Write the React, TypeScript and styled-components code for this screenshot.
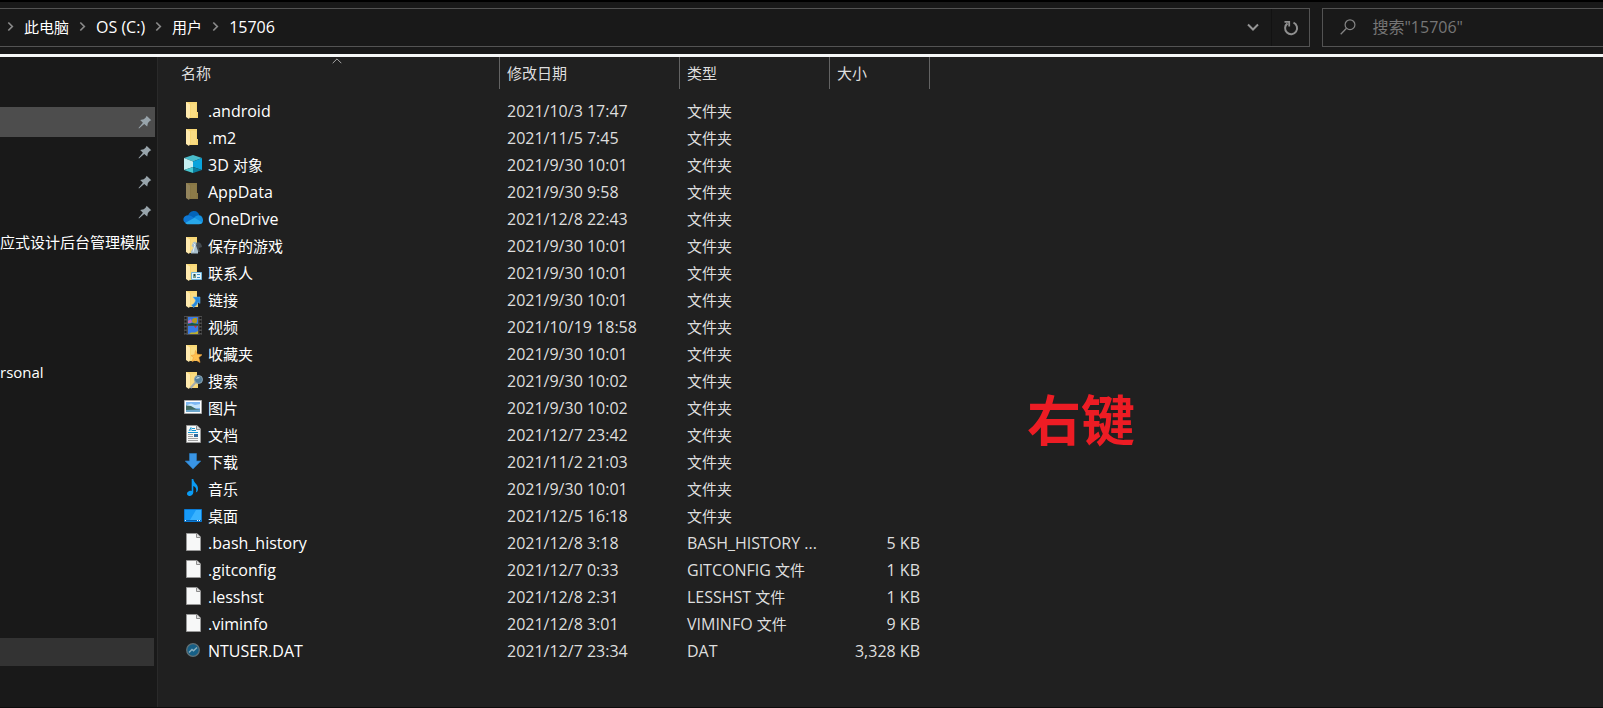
import React from 'react';
import styled, { createGlobalStyle } from 'styled-components';

const GlobalStyle = createGlobalStyle`
  * { box-sizing: border-box; }
  body {
    margin: 0;
    background: #191919;
    color: #ffffff;
    font-family: 'Open Sans', 'Noto Sans CJK SC', sans-serif;
    font-size: 16px;
    line-height: 20px;
    overflow: hidden;
  }
  button, input { font: inherit; color: inherit; }
`;

const Window = styled.div`
  display: grid;
  grid-template-rows: auto 1fr;
  min-height: 100vh;
  border-top: 2px solid #000000;
  border-bottom: 1px solid #0c0c0c;
`;

const Toolbar = styled.header`
  display: flex;
  gap: 12px;
  padding: 6px 0 7px;
  border-bottom: 3px solid #f6f8f7;
`;

const AddressBar = styled.div`
  display: flex;
  flex: 1;
  height: 39px;
  border: 1px solid #535353;
  border-left: 0;
`;

const Breadcrumbs = styled.nav`
  display: flex;
  flex: 1;
  align-items: center;
  gap: 10px;
  padding: 0 0 2px 7px;
`;

const Crumb = styled.a`
  color: #ffffff;
  text-decoration: none;
  white-space: nowrap;
`;

const Han = styled.span`
  font-size: 15px;
`;

const ToolButton = styled.button<{ $width: number; $divided?: boolean }>`
  display: flex;
  align-items: center;
  justify-content: center;
  width: ${(p) => p.$width}px;
  padding: 0;
  background: none;
  border: 0;
  border-left: ${(p) => (p.$divided ? '1px solid #121212' : '0')};
`;

const SearchBox = styled.label`
  display: flex;
  align-items: center;
  gap: 16px;
  width: 17.5%;
  height: 39px;
  padding: 0 0 2px 17px;
  border: 1px solid #535353;
  border-right: 0;
`;

const SearchInput = styled.input`
  flex: 1;
  min-width: 0;
  padding: 0;
  background: none;
  border: 0;
  outline: 0;
  &::placeholder { color: #767676; opacity: 1; }
`;

const Body = styled.div`
  display: grid;
  grid-template-columns: 158px 1fr;
`;

const Sidebar = styled.aside`
  padding: 50px 2px 0 0;
  border-right: 1px solid #2a2a2a;
`;

const NavList = styled.ul<{ $spaceAbove?: number }>`
  margin: ${(p) => p.$spaceAbove ?? 0}px 0 0;
  padding: 0;
  list-style: none;
`;

const NavItem = styled.li<{ $tone?: string }>`
  display: flex;
  align-items: center;
  height: 30px;
  background: ${(p) => p.$tone ?? 'transparent'};
  font-size: 15px;
  white-space: nowrap;
`;

const ActiveDrive = styled(NavItem)`
  height: 28px;
  margin-right: 1px;
`;

const NavLink = styled.a`
  color: #ffffff;
  text-decoration: none;
`;

const PinSlot = styled.span`
  display: flex;
  margin-left: auto;
  padding-right: 3px;
`;

const FilePane = styled.main`
  position: relative;
  padding-left: 16px;
  background: #202020;
`;

const FileTable = styled.table`
  width: 756px;
  table-layout: fixed;
  border-collapse: separate;
  border-spacing: 0;
`;

const Column = styled.col<{ $width: number }>`
  width: ${(p) => p.$width}px;
`;

const HeadCell = styled.th`
  position: relative;
  height: 41px;
  padding: 0;
  vertical-align: top;
  font-weight: 400;
`;

const SortButton = styled.button`
  display: block;
  width: 100%;
  height: 32px;
  padding: 0 7px;
  background: none;
  border: 0;
  border-right: 1px solid #636363;
  color: #dedede;
  font-size: 15px;
  text-align: left;
`;

const SortMark = styled.svg`
  position: absolute;
  top: 1px;
  left: 50%;
  margin-left: -5px;
`;

const Cell = styled.td<{ $align?: string }>`
  height: 27px;
  padding: 0 10px 2px 7px;
  color: #dedede;
  text-align: ${(p) => p.$align ?? 'left'};
  white-space: nowrap;
`;

const NameLink = styled.a`
  display: flex;
  align-items: center;
  gap: 5px;
  padding-left: 2px;
  color: #ffffff;
  text-decoration: none;
`;

const IconSvg = styled.svg`
  flex: none;
  width: 20px;
  height: 21px;
  padding-bottom: 1px;
`;

const Note = styled.strong`
  position: absolute;
  top: 325px;
  left: 869px;
  color: #ed1c24;
  font-family: 'Noto Sans CJK SC', sans-serif;
  font-size: 54px;
  font-weight: 700;
  line-height: 72px;
`;

/* Sets Chinese runs one step smaller than the Latin text beside them. */
const Label = ({ text }: { text: string }) => (
  <span>
    {text
      .split(/([\u4e00-\u9fff]+)/)
      .filter(Boolean)
      .map((run, i) => (/[\u4e00-\u9fff]/.test(run) ? <Han key={i}>{run}</Han> : run))}
  </span>
);

const ChevronRight = () => (
  <svg width="7" height="11" viewBox="0 0 7 11" aria-hidden="true">
    <path d="M1.3 1.5L5.3 5.5L1.3 9.5" fill="none" stroke="#8a8a8a" strokeWidth="1.7" />
  </svg>
);

const Pin = () => (
  <svg width="14" height="14" viewBox="0 0 14 14" aria-hidden="true">
    <path d="M8.6 .7L13.3 5.2L12 5.8L9.9 8.1L9.2 11.5L6.2 9L1 13.5L.5 13L4.9 7.7L2.2 5L5.8 4.3L8 2.2Z" fill="#98a4ab" />
  </svg>
);

const Folder = ({ dim }: { dim?: boolean }) => (
  <g>
    <path d="M3 2H14V12H15V18H7L3 16Z" fill={dim ? '#887745' : '#f8d775'} />
    <path d="M8 4H13V17H8Z" fill={dim ? '#8f7e4c' : '#fbdf8b'} opacity=".6" />
    <path d="M3 2L7 4.5V17L6 19L3 17Z" fill={dim ? '#93845c' : '#ffeaae'} />
  </g>
);

const Sheet = () => (
  <g>
    <path d="M3.5 1.5H14L17.5 5V18.5H3.5Z" fill="#f7f8f8" stroke="#989898" />
    <path d="M13.5 1.5V5.5H17.5" fill="#dddddd" stroke="#8c8c8c" />
  </g>
);

const drawings: Record<string, React.ReactNode> = {
  folder: <Folder />,
  hidden: <Folder dim />,
  cube: (
    <g>
      <path d="M10 1L19 4L10 7.5L1 4Z" fill="#49bccb" />
      <path d="M1 4L10 7.5V13L1 16Z" fill="#c5eff1" />
      <path d="M19 4L10 7.5V13L19 16Z" fill="#08a4dc" />
      <path d="M1 16L10 13V19Z" fill="#48c8d2" />
      <path d="M19 16L10 13V19Z" fill="#087f9f" />
    </g>
  ),
  cloud: (
    <g>
      <path d="M5 8C6 4 9 3 11 3C14 3 16 5 16.5 8L12 12Z" fill="#0364b8" />
      <path d="M3 15C0 14.5-.5 10 2 8.3C5 6 8 7.5 13 11L5 16Z" fill="#0f78d4" />
      <path d="M11 10C13 7 18 6 19.5 10C21 14 19 16 17 16L10 14Z" fill="#1490df" />
      <path d="M2 15L11.5 9.8L19.3 14.6C18.5 16 17.5 16.2 16 16.2H5C4 16.2 3 16 2 15Z" fill="#28a8ea" />
    </g>
  ),
  games: (
    <g>
      <Folder />
      <path d="M13 8C16 6 19 9 19 12L16 13L17 17H13Z" fill="#454b50" />
      <path d="M10 7.5C12 5.5 14.5 8 13 10.5L15 16V18.5H8V16.5L10.5 12.5L8.5 11Z" fill="#a9c0ce" />
      <path d="M10.5 8.5L12 10L11 13L10 17" fill="none" stroke="#e6eff4" />
    </g>
  ),
  contacts: (
    <g>
      <Folder />
      <path d="M8.5 10.5H18.5V17.5H8.5Z" fill="#e2f3fb" stroke="#6fb4d8" />
      <path d="M10 12H13V16H10Z" fill="#789f8e" />
      <path d="M11 12H12V14H11Z" fill="#2e4653" />
      <path d="M14 12.5H17M14 15.5H17" stroke="#3c8fc4" />
    </g>
  ),
  links: (
    <g>
      <Folder />
      <path d="M10 8H17V14.5L15 13C14.5 15.5 13 17 10.5 18.5L8.5 16C11 15 12 13.5 12.5 11Z" fill="#2587dc" stroke="#68b4ee" strokeWidth=".5" />
    </g>
  ),
  video: (
    <g>
      <path d="M1 0H19V19H1Z" fill="#4d4d4d" />
      <path d="M2.5 1V19M17.5 1V19" stroke="#181818" strokeWidth="2" strokeDasharray="2 1.5" />
      <path d="M5 1H15V9H5ZM5 10H15V18H5Z" fill="#397ae5" />
      <path d="M5 5L8 3L9 6L8 7H5Z" fill="#c46cb5" />
      <path d="M9 3.5L11 2H14V6L12 8L9 6Z" fill="#b29823" />
      <path d="M5 8L9 7L15 8V9H5Z" fill="#145946" />
      <path d="M11 10H14L12.5 12Z" fill="#d73131" />
      <path d="M6 18L8 16.5H12L15 15V18Z" fill="#bfb12c" />
    </g>
  ),
  favorites: (
    <g>
      <Folder />
      <path d="M12.5 7.5L14.3 11.2L19 11.8L15.8 14.5L17 19.5L12.8 17L9 18.5L10.5 14.5L8 12.5L11.8 11.8Z" fill="#ffc04f" stroke="#eea13c" strokeWidth=".6" />
    </g>
  ),
  searches: (
    <g>
      <Folder />
      <path d="M12.5 12.5L7.5 18" stroke="#a5adb0" strokeWidth="2" />
      <circle cx="15.5" cy="9.5" r="4" fill="#55809d" stroke="#8ba3b0" />
      <path d="M13 9C14 6.5 16 6.5 17 8Z" fill="#c3dbe8" />
    </g>
  ),
  pictures: (
    <g>
      <path d="M1.5 3.5H18.5V16.5H1.5Z" fill="#ffffff" stroke="#a8a8a8" />
      <path d="M3 5H17V15H3Z" fill="#7eb8f2" />
      <path d="M4 8L8 6.5L12 8L17 7V11H4Z" fill="#c6e5fa" />
      <path d="M3 8.5L8 9L13 12L17 12.5V13H3Z" fill="#426b61" />
      <path d="M3 13L17 12.5V15H3Z" fill="#6ca7cc" />
    </g>
  ),
  documents: (
    <g>
      <Sheet />
      <path d="M6 7L8 3.5V7M9 4.5H12M9 6.5H13M5 8.5H15" stroke="#1797d3" fill="none" />
      <path d="M5 10.5H10M5 12.5H10M5 14.5H15M5 16.5H15" stroke="#a0a0a0" />
      <path d="M11 10H15V13H11Z" fill="#326a9d" />
    </g>
  ),
  downloads: <path d="M6.5 2.5H13.5V10H17.8L10 18L2.2 10H6.5Z" fill="#3994e4" stroke="#287abd" strokeWidth=".7" />,
  music: <path d="M8.7 1H10.3C10.5 5 15.5 6 15 11.5C14.8 13 14 14 12.8 14.5C14 11.5 13 9 10.3 8V14.5C10 17 7.5 18.5 5.5 17.7C3.2 16.7 3.8 13.7 6.3 12.9C7.2 12.6 8 12.7 8.7 13Z" fill="#0a9cf5" />,
  desktop: (
    <g>
      <path d="M1.5 4.5H18.5V16.5H1.5Z" fill="#179af7" stroke="#0b7bd5" />
      <path d="M13 5H18V15H7Z" fill="#38b2ff" />
      <path d="M2 15.5H18" stroke="#075eaa" />
      <path d="M2 15.5H3M14 15.5H15M16 15.5H17" stroke="#ffffff" />
    </g>
  ),
  file: <Sheet />,
  system: (
    <g>
      <circle cx="10" cy="10" r="6.3" fill="#165f86" stroke="#5f7076" strokeWidth="1.3" />
      <path d="M6 12.5L9 9.5L10.5 10.8L14 7.5" fill="none" stroke="#8bb0bf" strokeWidth="1.5" />
    </g>
  ),
};

const FOLDER = '文件夹';

const files: [string, string, string, string, string][] = [
  ['folder', '.android', '2021/10/3 17:47', FOLDER, ''],
  ['folder', '.m2', '2021/11/5 7:45', FOLDER, ''],
  ['cube', '3D 对象', '2021/9/30 10:01', FOLDER, ''],
  ['hidden', 'AppData', '2021/9/30 9:58', FOLDER, ''],
  ['cloud', 'OneDrive', '2021/12/8 22:43', FOLDER, ''],
  ['games', '保存的游戏', '2021/9/30 10:01', FOLDER, ''],
  ['contacts', '联系人', '2021/9/30 10:01', FOLDER, ''],
  ['links', '链接', '2021/9/30 10:01', FOLDER, ''],
  ['video', '视频', '2021/10/19 18:58', FOLDER, ''],
  ['favorites', '收藏夹', '2021/9/30 10:01', FOLDER, ''],
  ['searches', '搜索', '2021/9/30 10:02', FOLDER, ''],
  ['pictures', '图片', '2021/9/30 10:02', FOLDER, ''],
  ['documents', '文档', '2021/12/7 23:42', FOLDER, ''],
  ['downloads', '下载', '2021/11/2 21:03', FOLDER, ''],
  ['music', '音乐', '2021/9/30 10:01', FOLDER, ''],
  ['desktop', '桌面', '2021/12/5 16:18', FOLDER, ''],
  ['file', '.bash_history', '2021/12/8 3:18', 'BASH_HISTORY ...', '5 KB'],
  ['file', '.gitconfig', '2021/12/7 0:33', 'GITCONFIG 文件', '1 KB'],
  ['file', '.lesshst', '2021/12/8 2:31', 'LESSHST 文件', '1 KB'],
  ['file', '.viminfo', '2021/12/8 3:01', 'VIMINFO 文件', '9 KB'],
  ['system', 'NTUSER.DAT', '2021/12/7 23:34', 'DAT', '3,328 KB'],
];

const crumbs = ['此电脑', 'OS (C:)', '用户', '15706'];
const columns = [
  { title: '名称', width: 326 },
  { title: '修改日期', width: 180 },
  { title: '类型', width: 150 },
  { title: '大小', width: 100 },
];

export default function App() {
  return (
    <>
      <GlobalStyle />
      <Window>
        <Toolbar>
          <AddressBar>
            <Breadcrumbs>
              {crumbs.map((name) => (
                <React.Fragment key={name}>
                  <ChevronRight />
                  <Crumb href="#"><Label text={name} /></Crumb>
                </React.Fragment>
              ))}
            </Breadcrumbs>
            <ToolButton $width={37} aria-label="历史记录">
              <svg width="12" height="9" viewBox="0 0 12 9">
                <path d="M1 1.5L6 6.5L11 1.5" fill="none" stroke="#969696" strokeWidth="2" />
              </svg>
            </ToolButton>
            <ToolButton $width={38} $divided aria-label="刷新">
              <svg width="16" height="16" viewBox="0 0 16 16">
                <path d="M10.5 2.7A6 6 0 1 1 4.5 3.4" fill="none" stroke="#8f8f8f" strokeWidth="2" />
                <path d="M1.5 1.8H6.2V6.5" fill="none" stroke="#8f8f8f" strokeWidth="1.8" />
              </svg>
            </ToolButton>
          </AddressBar>
          <SearchBox>
            <svg width="16" height="16" viewBox="0 0 16 16" aria-hidden="true">
              <circle cx="10" cy="5.7" r="4.9" fill="none" stroke="#858585" strokeWidth="1.2" />
              <path d="M6.5 9.3L.7 15.2" stroke="#858585" strokeWidth="1.3" />
            </svg>
            <SearchInput type="text" aria-label="搜索" placeholder={'搜索"15706"'} />
          </SearchBox>
        </Toolbar>
        <Body>
          <Sidebar>
            <NavList>
              {['#4d4d4d', undefined, undefined, undefined].map((tone, i) => (
                <NavItem key={i} $tone={tone}>
                  <PinSlot><Pin /></PinSlot>
                </NavItem>
              ))}
              <NavItem>
                <NavLink href="#">应式设计后台管理模版</NavLink>
              </NavItem>
            </NavList>
            <NavList $spaceAbove={100}>
              <NavItem><NavLink href="#">rsonal</NavLink></NavItem>
            </NavList>
            <NavList $spaceAbove={251}>
              <ActiveDrive $tone="#333333" />
            </NavList>
          </Sidebar>
          <FilePane>
            <FileTable>
              <colgroup>
                {columns.map((c) => <Column key={c.title} $width={c.width} />)}
              </colgroup>
              <thead>
                <tr>
                  {columns.map((c, i) => (
                    <HeadCell key={c.title} scope="col">
                      <SortButton>{c.title}</SortButton>
                      {i === 0 && (
                        <SortMark width="10" height="6" viewBox="0 0 10 6" aria-hidden="true">
                          <path d="M.7 5.2L5 .9L9.3 5.2" fill="none" stroke="#a8a8a8" />
                        </SortMark>
                      )}
                    </HeadCell>
                  ))}
                </tr>
              </thead>
              <tbody>
                {files.map(([icon, name, date, type, size]) => (
                  <tr key={name}>
                    <Cell>
                      <NameLink href="#">
                        <IconSvg viewBox="0 0 20 20" aria-hidden="true">{drawings[icon]}</IconSvg>
                        <Label text={name} />
                      </NameLink>
                    </Cell>
                    <Cell>{date}</Cell>
                    <Cell><Label text={type} /></Cell>
                    <Cell $align="right">{size}</Cell>
                  </tr>
                ))}
              </tbody>
            </FileTable>
            <Note>右键</Note>
          </FilePane>
        </Body>
      </Window>
    </>
  );
}
